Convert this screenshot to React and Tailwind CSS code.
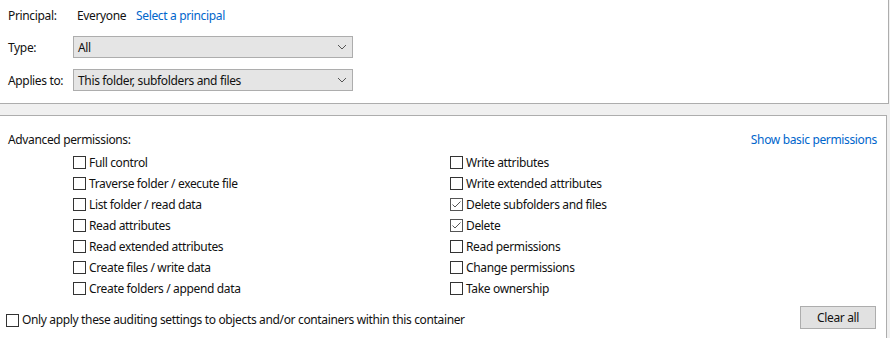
import React from "react";

function Box({ checked }) {
  return (
    <span className={`w-[13px] h-[13px] shrink-0 bg-white border ${checked ? "border-[#555]" : "border-[#333]"} flex items-center justify-center`}>
      {checked && (
        <svg width="11" height="11" viewBox="0 0 11 11">
          <path d="M1.5 5.5 L4 8 L9.5 2.5" fill="none" stroke="#555" strokeWidth="1" />
        </svg>
      )}
    </span>
  );
}

function Check({ label, checked }) {
  return (
    <div className="flex items-center gap-[3px] h-[21px]">
      <Box checked={checked} />
      <span className="leading-[16px] mt-[1px]">{label}</span>
    </div>
  );
}

function Chevron() {
  return (
    <svg width="10" height="6" viewBox="0 0 10 6" className="mr-[3px]">
      <path d="M1 1 L5 5 L9 1" fill="none" stroke="#555" strokeWidth="1" />
    </svg>
  );
}

function Select({ value }) {
  return (
    <div className="w-[280px] h-[22px] bg-[#e5e5e5] border border-[#adadad] flex items-center justify-between pl-[4px] pr-[2px]">
      <span className="leading-[16px] mt-[1px]">{value}</span>
      <Chevron />
    </div>
  );
}

export default function App() {
  const left = [
    ["Full control", false],
    ["Traverse folder / execute file", false],
    ["List folder / read data", false],
    ["Read attributes", false],
    ["Read extended attributes", false],
    ["Create files / write data", false],
    ["Create folders / append data", false],
  ];
  const right = [
    ["Write attributes", false],
    ["Write extended attributes", false],
    ["Delete subfolders and files", true],
    ["Delete", true],
    ["Read permissions", false],
    ["Change permissions", false],
    ["Take ownership", false],
  ];
  return (
    <div className="w-[890px] h-[338px] bg-[#f0f0f0] font-['Noto_Sans',sans-serif] text-[12px] tracking-[-0.35px] text-[#111] overflow-hidden">
      <div className="w-[889px] h-[104px] bg-white border-r border-b border-[#adadad] pt-[8px]">
        <div className="flex items-center h-[16px] leading-[16px] pl-[8px]">
          <span className="w-[69px]">Principal:</span>
          <span className="w-[59px]">Everyone</span>
          <span className="text-[#0066cc]">Select a principal</span>
        </div>
        <div className="flex items-center mt-[12px] pl-[8px]">
          <span className="w-[65px] leading-[16px] mt-[1px]">Type:</span>
          <Select value="All" />
        </div>
        <div className="flex items-center mt-[11px] pl-[8px]">
          <span className="w-[65px] leading-[16px] mt-[1px]">Applies to:</span>
          <Select value="This folder, subfolders and files" />
        </div>
      </div>
      <div className="mt-[11px] w-[887px] h-[223px] bg-white border-t border-r border-[#adadad] pt-[16px]">
        <div className="flex justify-between leading-[16px] pl-[8px] pr-[9px]">
          <span>Advanced permissions:</span>
          <span className="text-[#0066cc]">Show basic permissions</span>
        </div>
        <div className="grid grid-cols-[377px_1fr] pl-[73px] mt-[4px]">
          <div className="flex flex-col">
            {left.map(([l, c]) => (
              <Check key={l} label={l} checked={c} />
            ))}
          </div>
          <div className="flex flex-col">
            {right.map(([l, c]) => (
              <Check key={l} label={l} checked={c} />
            ))}
          </div>
        </div>
        <div className="flex justify-between items-start mt-[7px] pl-[6px] pr-[10px]">
          <div className="flex items-center gap-[3px] mt-[6px]">
            <Box />
            <span className="leading-[16px]">Only apply these auditing settings to objects and/or containers within this container</span>
          </div>
          <button className="w-[76px] h-[23px] bg-[#e1e1e1] border border-[#adadad] leading-[16px]">Clear all</button>
        </div>
      </div>
    </div>
  );
}
